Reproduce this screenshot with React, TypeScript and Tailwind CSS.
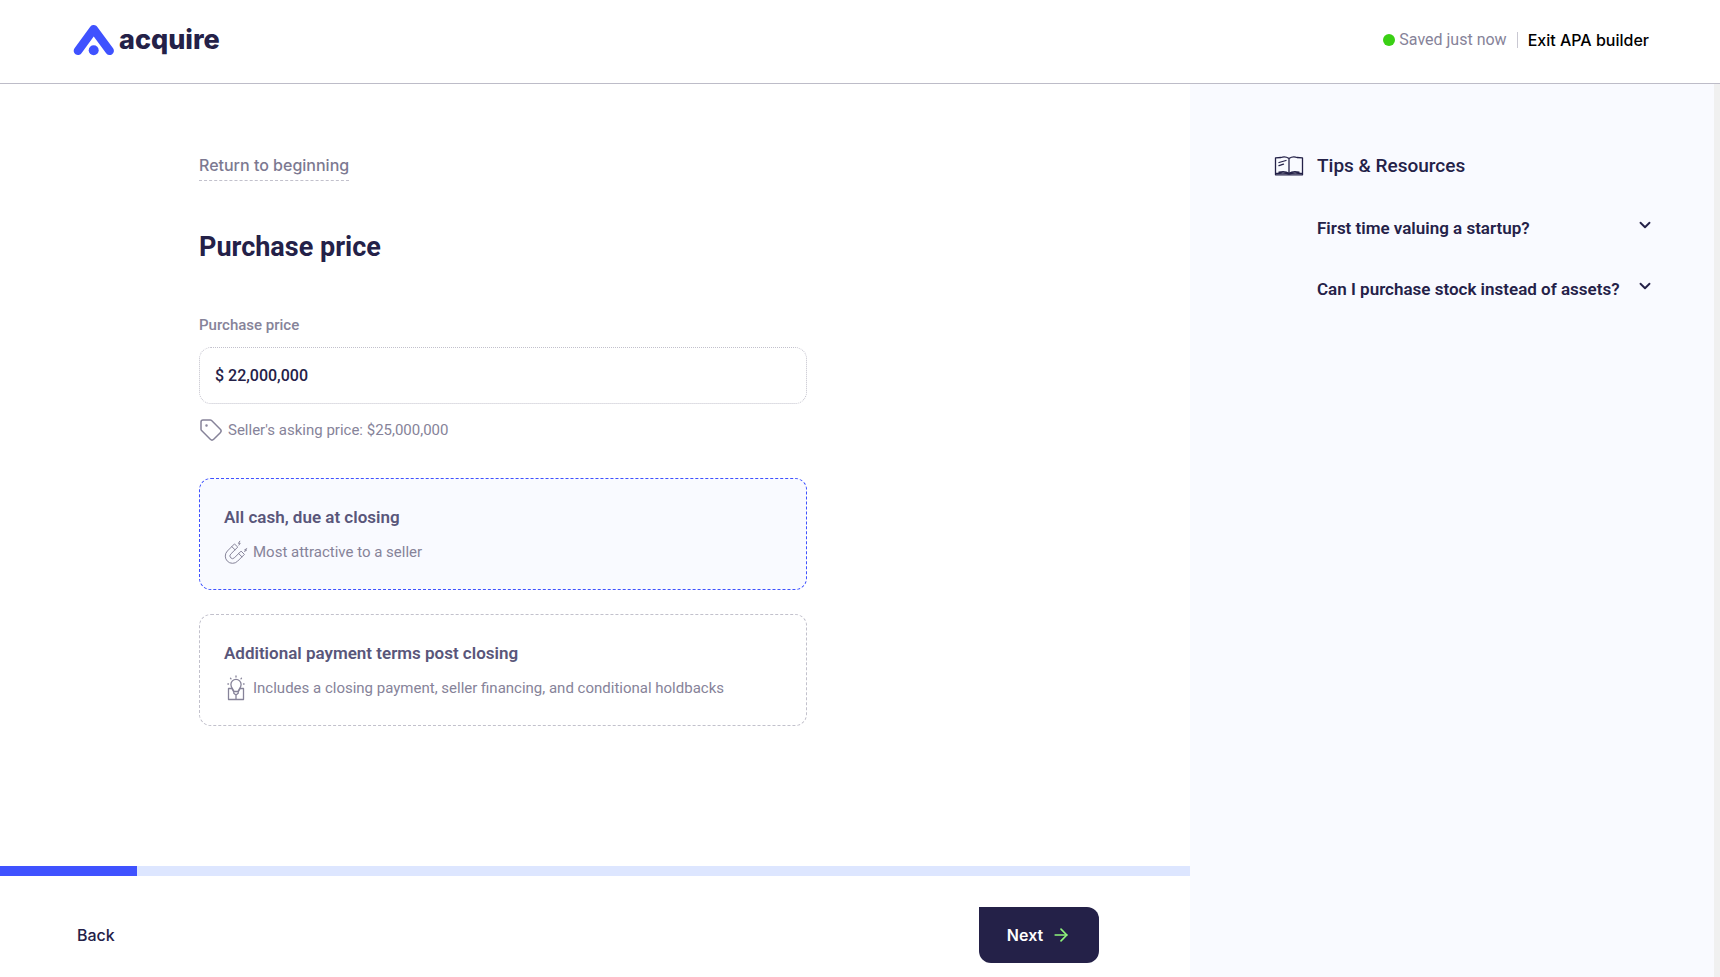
import { useState } from 'react';
import type { ReactNode } from 'react';
import { ArrowRight, ChevronDown, Tag } from 'lucide-react';

const STEP_PROGRESS = 11.5;

function Logo() {
  return (
    <a href="#" className="flex items-center gap-1">
      <svg width="43" height="32" viewBox="0 0 43 32" fill="none" aria-hidden="true">
        <path
          d="M6 26.8 21.7 5.2 37.6 26.8"
          stroke="#3f52ff"
          strokeWidth="8.6"
          strokeLinecap="round"
          strokeLinejoin="round"
        />
        <circle cx="21.7" cy="26.2" r="5" fill="#3f52ff" />
      </svg>
      <span className="font-['Inter',sans-serif] text-[27px] leading-8 font-extrabold text-[#242148]">
        acquire
      </span>
    </a>
  );
}

function MagnetIcon() {
  return (
    <svg width="24" height="24" viewBox="0 0 24 24" fill="none" stroke="currentColor" strokeLinecap="round" strokeLinejoin="round" aria-hidden="true">
      <path d="M10.2 4.2 3.4 11a7.2 7.2 0 0 0 10.2 10.2l6.8-6.8-3.3-3.3-6.7 6.7a2.6 2.6 0 0 1-3.7-3.7l6.8-6.7z" />
      <path d="m7.8 6.6 3.3 3.3M14.6 13.5l3.3 3.3M15.8 1.2l-1.4 2.2 1.8-.2-1.3 1.9M22.8 8.6l-2.2 1.3 2 .2-2 1.3" />
    </svg>
  );
}

function IdeaBoxIcon() {
  return (
    <svg width="24" height="26" viewBox="0 0 24 26" fill="none" stroke="currentColor" strokeWidth="1.3" strokeLinecap="round" strokeLinejoin="round" aria-hidden="true">
      <path d="M9.8 16.5c0-2.3-2.9-3.4-2.9-7a5.1 5.1 0 0 1 10.2 0c0 3.6-2.9 4.7-2.9 7" />
      <path d="M7.8 13.5H4.5v11h15v-11h-3.3M9.8 16.5v1.8L12 20l2.2-1.8v-1.7zM12 20v4.5M7.8 13.5l2 3.5M16.2 13.5l-2 3.5" />
      <path d="M12 1v1M6.5 3.2l.5.6M17.5 3.2l-.5.6M4.5 9h-.6M20.1 9h-.6" />
    </svg>
  );
}

function BookIcon() {
  return (
    <svg width="30" height="22" viewBox="0 0 30 22" fill="none" stroke="currentColor" strokeWidth="1.3" strokeLinecap="round" strokeLinejoin="round" aria-hidden="true">
      <path d="M15 3.5C12 1.5 9 1.8 7 2.5L1.5 2.8v17h27v-17l-5.5-.3c-2-.7-5-1-8 1zM15 3.5v14.8" />
      <path d="M2.5 18.5c4-.6 9-1 12.500.6 3.500-1.600 8.500-1.200 12.500-.6M5 17.200c4-.9 7.500-.5 10 1.100 2.500-1.600 6-2 10-1.100" />
      <path d="M5 7.500 12 5.500M5 10.700l4.500-1.500" />
    </svg>
  );
}

interface PaymentOptionProps {
  title: string;
  description: string;
  icon: ReactNode;
  checked: boolean;
  onSelect: () => void;
}

function PaymentOption({ title, description, icon, checked, onSelect }: PaymentOptionProps) {
  return (
    <label
      className={`flex h-28 cursor-pointer flex-col justify-center gap-[11px] rounded-xl border border-dashed px-6 ${
        checked ? 'border-[#3f52ff] bg-[#f9faff]' : 'border-[#c2c1cc] bg-white'
      }`}
    >
      <input type="radio" name="payment" className="sr-only" checked={checked} onChange={onSelect} />
      <span className="text-[17px] leading-6 font-semibold text-[#59567a]">{title}</span>
      <span className="flex h-6 items-center gap-[5px] text-[15px] leading-6 text-[#868399]">
        {icon}
        {description}
      </span>
    </label>
  );
}

function Tip({ question }: { question: string }) {
  const [open, setOpen] = useState(false);

  return (
    <button
      type="button"
      aria-expanded={open}
      onClick={() => setOpen(!open)}
      className="flex w-full items-start justify-between text-left text-[17px] leading-6 font-semibold text-[#242148]"
    >
      {question}
      <ChevronDown size={18} strokeWidth={2.5} />
    </button>
  );
}

export default function App() {
  const [price, setPrice] = useState('$ 22,000,000');
  const [payment, setPayment] = useState<'cash' | 'terms'>('cash');

  return (
    <div className="flex min-h-screen flex-col bg-white font-['Roboto',sans-serif] text-[#242148]">
      <header className="flex h-21 items-center justify-between border-b border-[#bdbcc8] pr-[71px] pb-1 pl-18">
        <Logo />
        <div className="flex items-center text-base">
          <span className="mr-1 size-3 rounded-full bg-[#3ad014]" />
          <span className="text-[#868399]">Saved just now</span>
          <span className="mx-2.5 h-4 w-px bg-[#c9c8d2]" />
          <a href="#" className="font-['Inter',sans-serif] font-medium text-black">
            Exit APA builder
          </a>
        </div>
      </header>

      <div className="flex flex-1">
        <div className="flex flex-1 flex-col">
          <main className="flex-1 px-[199px] pt-[69px]">
            <a
              href="#"
              className="inline-block border-b border-dashed border-[#c2c1cc] pb-[3px] font-['Inter',sans-serif] text-base font-medium text-[#7c7991]"
            >
              Return to beginning
            </a>
            <h1 className="mt-12 text-[27px] leading-9 font-bold">Purchase price</h1>

            <form className="mt-12 max-w-[608px]">
              <label htmlFor="price" className="block text-[15px] leading-6 font-medium text-[#868399]">
                Purchase price
              </label>
              <input
                id="price"
                type="text"
                value={price}
                onChange={(e) => setPrice(e.target.value)}
                className="mt-[10px] h-[57px] w-full rounded-xl border border-dotted border-[#c2c1cc] px-[15px] text-base font-medium"
              />
              <p className="mt-[14px] flex items-center gap-[5px] text-[15px] leading-6 text-[#868399]">
                <Tag size={24} strokeWidth={1.5} />
                Seller's asking price: $25,000,000
              </p>

              <div className="mt-9 flex flex-col gap-6">
                <PaymentOption
                  title="All cash, due at closing"
                  description="Most attractive to a seller"
                  icon={<MagnetIcon />}
                  checked={payment === 'cash'}
                  onSelect={() => setPayment('cash')}
                />
                <PaymentOption
                  title="Additional payment terms post closing"
                  description="Includes a closing payment, seller financing, and conditional holdbacks"
                  icon={<IdeaBoxIcon />}
                  checked={payment === 'terms'}
                  onSelect={() => setPayment('terms')}
                />
              </div>
            </form>
          </main>

          <div className="h-2.5 bg-[#dde6ff]">
            <div className="h-full bg-[#3f52ff]" style={{ width: `${STEP_PROGRESS}%` }} />
          </div>
          <footer className="flex items-center justify-between pt-[31px] pr-[91px] pb-3.5 pl-[77px] font-['Inter',sans-serif] text-base">
            <button type="button" className="font-medium">
              Back
            </button>
            <button
              type="button"
              className="flex h-14 w-30 items-center justify-center gap-2 rounded-xl rounded-tl-none bg-[#242148] font-semibold text-white"
            >
              Next
              <ArrowRight size={20} strokeWidth={2} className="text-[#8ff57a]" />
            </button>
          </footer>
        </div>

        <aside className="w-[530px] shrink-0 border-r-6 border-[#f0f0f0] bg-[#f9faff] pt-17 pr-15 pl-21">
          <h2 className="flex items-center gap-[13px] text-[19px] leading-7 font-medium">
            <BookIcon />
            Tips &amp; Resources
          </h2>
          <div className="mt-9 flex flex-col gap-[37px] pl-[43px]">
            <Tip question="First time valuing a startup?" />
            <Tip question="Can I purchase stock instead of assets?" />
          </div>
        </aside>
      </div>
    </div>
  );
}
